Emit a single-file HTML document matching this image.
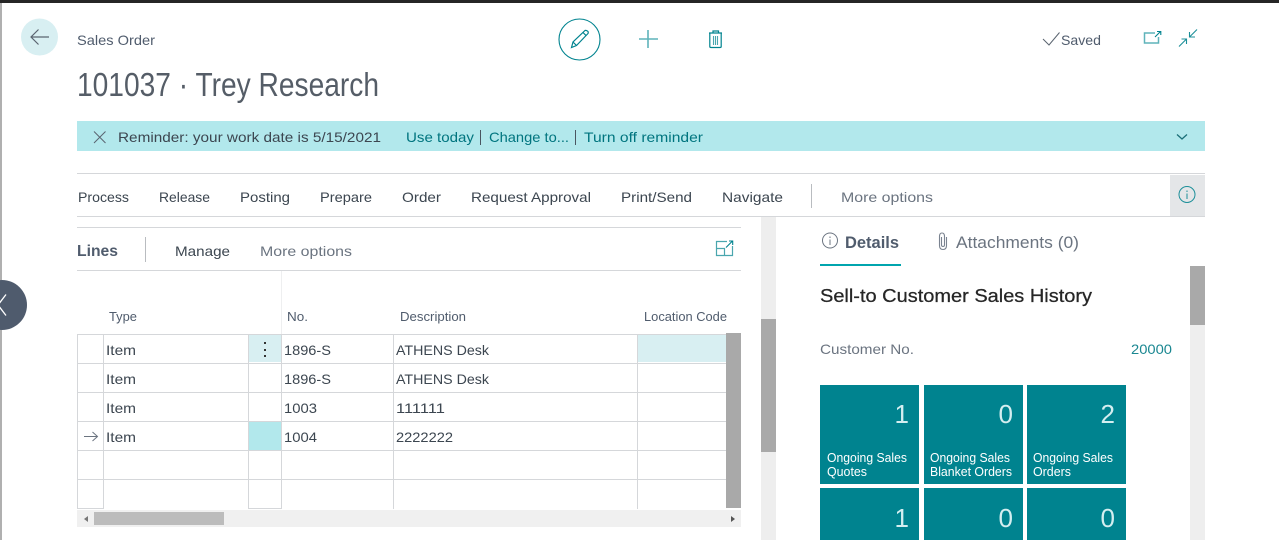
<!DOCTYPE html>
<html lang="en"><head><meta charset="utf-8"><title>Sales Order</title>
<style>
html,body{margin:0;padding:0;background:#fff;overflow:hidden}
svg{display:block}
text{font-family:"Liberation Sans",sans-serif;white-space:pre}
.g{fill:#505c6d}.t{fill:#00757f}.d{fill:#3c4650}
</style></head><body>
<svg width="1279" height="540" viewBox="0 0 1279 540" xmlns="http://www.w3.org/2000/svg">
<rect width="1279" height="540" fill="#fff"/>
<rect width="1279" height="3" fill="#262626"/>
<rect x="0" y="3" width="2" height="537" fill="#b0b0b0"/>

<!-- header -->
<circle cx="39.5" cy="37" r="18.5" fill="#d8eff2"/>
<path d="M49 37H31.5M38.500 29.500L31 37L38.500 44.500" fill="none" stroke="#5a6470" stroke-width="1.200"/>
<text x="77" y="45" font-size="14" class="g" textLength="78" lengthAdjust="spacingAndGlyphs">Sales Order</text>
<text x="77" y="96" font-size="33" fill="#555d67" textLength="302" lengthAdjust="spacingAndGlyphs">101037 · Trey Research</text>

<circle cx="579.500" cy="39.500" r="20.500" fill="#fff" stroke="#00838f" stroke-width="1.100"/>
<path d="M571.500 47.500L573 42L585 30.500Q586.500 30 588 31.500Q588.500 33 588 33.500L576.500 45.500ZM573 42L576.500 45.500M583 32.500L586.300 35.800" fill="none" stroke="#00838f" stroke-width="1.200"/>
<path d="M639 39H658M648 30V48" stroke="#5fb3ba" stroke-width="1.600" fill="none"/>
<path d="M709 33H722M713 33V31H718.500V33M709.800 33V46.500Q709.800 47.500 711 47.500H720Q721.200 47.500 721.200 46.500V33" fill="none" stroke="#00838f" stroke-width="1.200"/>
<path d="M713.500 36V45M715.500 36V45M717.500 36V45" stroke="#4aa6ae" stroke-width="1.100"/>

<path d="M1043 39L1049 45L1059.500 32.500" fill="none" stroke="#5a6470" stroke-width="1"/>
<text x="1061" y="45" font-size="14" class="g" textLength="40" lengthAdjust="spacingAndGlyphs">Saved</text>
<path d="M1155 33H1144.500V43H1158.500V37" fill="none" stroke="#5fb3ba" stroke-width="1.500"/>
<path d="M1155 37L1160.500 31.500M1157 31.500H1160.800V35" fill="none" stroke="#00838f" stroke-width="1.100"/>
<path d="M1197 29.500L1189.500 37M1189.500 32V37H1195M1179 46.500L1186.500 39M1181.500 39H1186.500V44" fill="none" stroke="#1c8f99" stroke-width="1.100"/>

<!-- banner -->
<rect x="77" y="121" width="1128" height="30" fill="#b2e8ec"/>
<path d="M94 131.500L105.500 143M105.500 131.500L94 143" stroke="#5a6470" stroke-width="1" fill="none"/>
<text x="118" y="142" font-size="14" class="d" textLength="263" lengthAdjust="spacingAndGlyphs">Reminder: your work date is 5/15/2021</text>
<text x="406" y="142" font-size="14" class="t" textLength="68" lengthAdjust="spacingAndGlyphs">Use today</text>
<rect x="480" y="130" width="1" height="15" fill="#4a5560"/>
<text x="489" y="142" font-size="14" class="t" textLength="80" lengthAdjust="spacingAndGlyphs">Change to...</text>
<rect x="575" y="130" width="1" height="15" fill="#4a5560"/>
<text x="584" y="142" font-size="14" class="t" textLength="119" lengthAdjust="spacingAndGlyphs">Turn off reminder</text>
<path d="M1177 134.500L1182 139L1187 134.500" fill="none" stroke="#1a6f78" stroke-width="1.300"/>

<!-- action bar -->
<rect x="77" y="173" width="1128" height="1" fill="#d5d7da"/>
<rect x="77" y="216" width="1128" height="1" fill="#d5d7da"/>
<text x="78" y="202" font-size="14" class="d" textLength="51" lengthAdjust="spacingAndGlyphs">Process</text>
<text x="159" y="202" font-size="14" class="d" textLength="51" lengthAdjust="spacingAndGlyphs">Release</text>
<text x="240" y="202" font-size="14" class="d" textLength="50" lengthAdjust="spacingAndGlyphs">Posting</text>
<text x="320" y="202" font-size="14" class="d" textLength="52" lengthAdjust="spacingAndGlyphs">Prepare</text>
<text x="402" y="202" font-size="14" class="d" textLength="39" lengthAdjust="spacingAndGlyphs">Order</text>
<text x="471" y="202" font-size="14" class="d" textLength="120" lengthAdjust="spacingAndGlyphs">Request Approval</text>
<text x="621" y="202" font-size="14" class="d" textLength="71" lengthAdjust="spacingAndGlyphs">Print/Send</text>
<text x="722" y="202" font-size="14" class="d" textLength="61" lengthAdjust="spacingAndGlyphs">Navigate</text>
<rect x="811" y="184" width="1" height="24" fill="#b9bcc0"/>
<text x="841" y="202" font-size="14" fill="#6b7480" textLength="92" lengthAdjust="spacingAndGlyphs">More options</text>
<rect x="1170" y="175" width="35" height="41" fill="#e4e6e8"/>
<circle cx="1187" cy="194.500" r="8" fill="none" stroke="#1c8f99" stroke-width="1"/>
<path d="M1187 193.500V199M1187 190.500V192" stroke="#1c8f99" stroke-width="1"/>

<!-- lines section -->
<rect x="77" y="227" width="664" height="1" fill="#d5d7da"/>
<rect x="77" y="270" width="664" height="1" fill="#d5d7da"/>
<text x="77" y="256" font-size="16" font-weight="700" class="g" textLength="41" lengthAdjust="spacingAndGlyphs">Lines</text>
<rect x="145" y="237" width="1" height="25" fill="#b9bcc0"/>
<text x="175" y="256" font-size="14" class="d" textLength="55" lengthAdjust="spacingAndGlyphs">Manage</text>
<text x="260" y="256" font-size="14" fill="#6b7480" textLength="92" lengthAdjust="spacingAndGlyphs">More options</text>
<path d="M727 241.500H716.500V255.500H732.500V246M716.500 248.500H724.500V255.500" fill="none" stroke="#4aa6ae" stroke-width="1.200"/>
<path d="M726 247.500L732.500 241M729 241H732.700V245" fill="none" stroke="#00838f" stroke-width="1.100"/>

<!-- grid header -->
<rect x="281" y="271" width="1" height="63" fill="#eeeff0"/>
<text x="109" y="321" font-size="12.500" class="g" textLength="28" lengthAdjust="spacingAndGlyphs">Type</text>
<text x="287" y="321" font-size="12.500" class="g" textLength="21" lengthAdjust="spacingAndGlyphs">No.</text>
<text x="400" y="321" font-size="12.500" class="g" textLength="66" lengthAdjust="spacingAndGlyphs">Description</text>
<text x="644" y="321" font-size="12.500" class="g" textLength="83" lengthAdjust="spacingAndGlyphs">Location Code</text>

<!-- grid cells -->
<rect x="249" y="335" width="32" height="27" fill="#d8eff2"/>
<rect x="638" y="335" width="88" height="27" fill="#d8eff2"/>
<rect x="249" y="422" width="32" height="28" fill="#b2e8ec"/>
<g fill="#d5d7da">
<rect x="77" y="334" width="649" height="1"/>
<rect x="77" y="363" width="649" height="1"/>
<rect x="77" y="392" width="649" height="1"/>
<rect x="77" y="421" width="649" height="1"/>
<rect x="77" y="450" width="649" height="1"/>
<rect x="77" y="479" width="649" height="1"/>
<rect x="77" y="508" width="27" height="1"/>
<rect x="248" y="508" width="34" height="1"/>
<rect x="77" y="334" width="1" height="175"/>
<rect x="103" y="334" width="1" height="175"/>
<rect x="248" y="334" width="1" height="175"/>
<rect x="281" y="334" width="1" height="175"/>
<rect x="393" y="334" width="1" height="175"/>
<rect x="637" y="334" width="1" height="175"/>
</g>
<rect x="726" y="333" width="15" height="175" fill="#a9a9a9"/>
<rect x="264" y="342" width="2" height="2" fill="#333"/><rect x="264" y="349" width="2" height="2" fill="#333"/><rect x="264" y="355" width="2" height="2" fill="#333"/>
<path d="M84 436.500H97M92.500 432L97.500 436.500L92.500 441" fill="none" stroke="#6b7480" stroke-width="1"/>

<g font-size="14" class="d">
<text x="106" y="355" textLength="30" lengthAdjust="spacingAndGlyphs">Item</text>
<text x="106" y="384" textLength="30" lengthAdjust="spacingAndGlyphs">Item</text>
<text x="106" y="413" textLength="30" lengthAdjust="spacingAndGlyphs">Item</text>
<text x="106" y="442" textLength="30" lengthAdjust="spacingAndGlyphs">Item</text>
<text x="284" y="355" textLength="47" lengthAdjust="spacingAndGlyphs">1896-S</text>
<text x="284" y="384" textLength="47" lengthAdjust="spacingAndGlyphs">1896-S</text>
<text x="284" y="413" textLength="33" lengthAdjust="spacingAndGlyphs">1003</text>
<text x="284" y="442" textLength="33" lengthAdjust="spacingAndGlyphs">1004</text>
<text x="396" y="355" textLength="93" lengthAdjust="spacingAndGlyphs">ATHENS Desk</text>
<text x="396" y="384" textLength="93" lengthAdjust="spacingAndGlyphs">ATHENS Desk</text>
<text x="396" y="413" textLength="49" lengthAdjust="spacingAndGlyphs">111111</text>
<text x="396" y="442" textLength="57" lengthAdjust="spacingAndGlyphs">2222222</text>
</g>

<!-- horizontal scrollbar -->
<rect x="77" y="510" width="664" height="17" fill="#f0f0f0"/>
<rect x="94" y="512" width="130" height="13" fill="#bcbcbc"/>
<path d="M88 516V522L84 519Z" fill="#777"/>
<path d="M731 516V522L735 519Z" fill="#555"/>

<!-- middle scrollbar -->
<rect x="761" y="217" width="15" height="323" fill="#eeeeee"/>
<rect x="761" y="319" width="15" height="133" fill="#a9a9a9"/>

<!-- collapse bubble -->
<circle cx="2" cy="305" r="25" fill="#4f5b6d"/>
<path d="M6 294.500L-2 305L6 315.500" fill="none" stroke="#fff" stroke-width="1.300"/>

<!-- factbox -->
<circle cx="830" cy="240.500" r="7.500" fill="none" stroke="#6b7480" stroke-width="1"/>
<path d="M830 239.500V245M830 236.500V238" stroke="#6b7480" stroke-width="1"/>
<text x="845" y="248" font-size="17" font-weight="700" class="g" textLength="54" lengthAdjust="spacingAndGlyphs">Details</text>
<rect x="820" y="264" width="81" height="2" fill="#00a5ae"/>
<path d="M946.500 237V245.500Q946.500 249.500 943 249.500Q939.500 249.500 939.500 245.500V236.500Q939.500 233 942 233Q944.500 233 944.500 236.500V245Q944.500 246.500 943 246.500Q941.500 246.500 941.500 245V237" fill="none" stroke="#7a8390" stroke-width="1.100"/>
<text x="956" y="248" font-size="17" fill="#6b7480" textLength="123" lengthAdjust="spacingAndGlyphs">Attachments (0)</text>
<text x="820" y="302" font-size="18" font-weight="400" stroke="#262626" stroke-width="0.250" fill="#262626" textLength="272" lengthAdjust="spacingAndGlyphs">Sell-to Customer Sales History</text>
<text x="820" y="354" font-size="14" fill="#6b7480" textLength="94" lengthAdjust="spacingAndGlyphs">Customer No.</text>
<text x="1131" y="354" font-size="14" fill="#1a8791" textLength="41" lengthAdjust="spacingAndGlyphs">20000</text>
<rect x="1190" y="266" width="15" height="274" fill="#eeeeee"/>
<rect x="1190" y="266" width="15" height="59" fill="#a9a9a9"/>

<!-- tiles -->
<g fill="#00838f">
<rect x="820" y="385" width="99" height="99"/>
<rect x="924" y="385" width="99" height="99"/>
<rect x="1027" y="385" width="99" height="99"/>
<rect x="820" y="488" width="99" height="52"/>
<rect x="924" y="488" width="99" height="52"/>
<rect x="1027" y="488" width="99" height="52"/>
</g>
<g fill="#d4eef0" font-size="26" text-anchor="end">
<text x="909" y="423">1</text>
<text x="1013" y="423">0</text>
<text x="1115" y="423">2</text>
<text x="909" y="527">1</text>
<text x="1013" y="527">0</text>
<text x="1115" y="527">0</text>
</g>
<g fill="#fff" font-size="12.500">
<text x="827" y="462" textLength="80" lengthAdjust="spacingAndGlyphs">Ongoing Sales</text>
<text x="827" y="476" textLength="40" lengthAdjust="spacingAndGlyphs">Quotes</text>
<text x="930" y="462" textLength="80" lengthAdjust="spacingAndGlyphs">Ongoing Sales</text>
<text x="930" y="476" textLength="82" lengthAdjust="spacingAndGlyphs">Blanket Orders</text>
<text x="1033" y="462" textLength="80" lengthAdjust="spacingAndGlyphs">Ongoing Sales</text>
<text x="1033" y="476" textLength="38" lengthAdjust="spacingAndGlyphs">Orders</text>
</g>
</svg>
</body></html>
